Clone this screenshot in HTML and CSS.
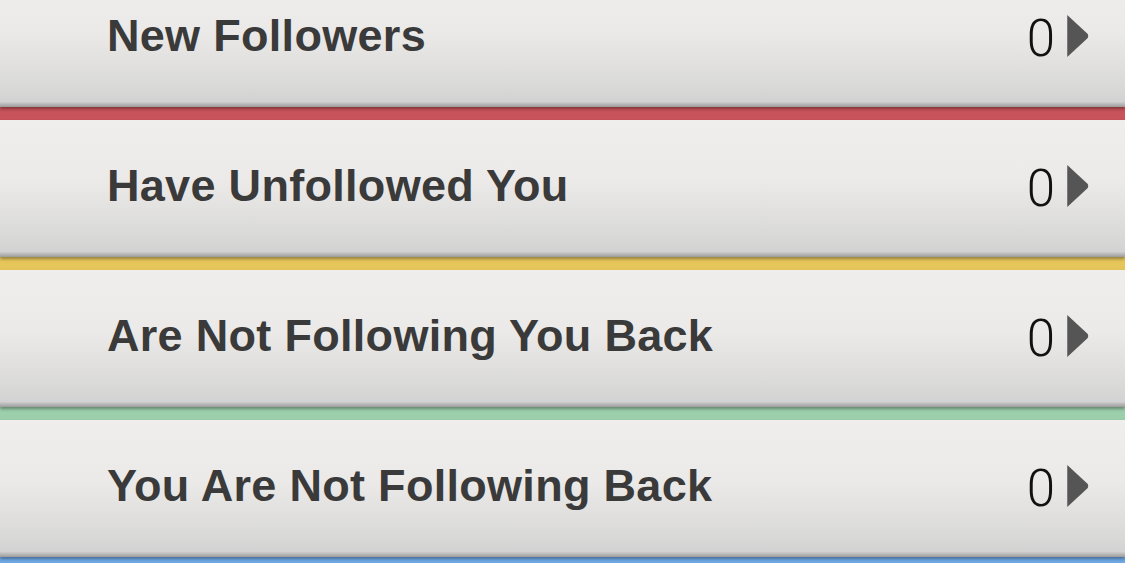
FILE: index.html
```html
<!DOCTYPE html>
<html lang="en">
<head>
<meta charset="utf-8">
<title>Followers</title>
<link rel="stylesheet" href="styles.css">
</head>
<body>
  <ul class="stats">
    <li class="stat">
      <div class="stat-row">
        <span class="stat-label">New Followers</span>
        <span class="stat-count">0</span>
        <svg class="chevron" viewBox="0 0 22 43" aria-hidden="true"><path d="M0 0 L21 19.5 Q22 21.5 21 23.5 L0 43 Z"/></svg>
      </div>
      <div class="stripe stripe-red"></div>
    </li>
    <li class="stat">
      <div class="stat-row">
        <span class="stat-label">Have Unfollowed You</span>
        <span class="stat-count">0</span>
        <svg class="chevron" viewBox="0 0 22 43" aria-hidden="true"><path d="M0 0 L21 19.5 Q22 21.5 21 23.5 L0 43 Z"/></svg>
      </div>
      <div class="stripe stripe-yellow"></div>
    </li>
    <li class="stat">
      <div class="stat-row">
        <span class="stat-label">Are Not Following You Back</span>
        <span class="stat-count">0</span>
        <svg class="chevron" viewBox="0 0 22 43" aria-hidden="true"><path d="M0 0 L21 19.5 Q22 21.5 21 23.5 L0 43 Z"/></svg>
      </div>
      <div class="stripe stripe-green"></div>
    </li>
    <li class="stat">
      <div class="stat-row">
        <span class="stat-label">You Are Not Following Back</span>
        <span class="stat-count">0</span>
        <svg class="chevron" viewBox="0 0 22 43" aria-hidden="true"><path d="M0 0 L21 19.5 Q22 21.5 21 23.5 L0 43 Z"/></svg>
      </div>
      <div class="stripe stripe-blue"></div>
    </li>
  </ul>
</body>
</html>
```

FILE: styles.css
```css
html, body {
  margin: 0;
  padding: 0;
  background: #e6e6e4;
  overflow: hidden;
}

.stats {
  list-style: none;
  margin: -30px 0 0;
  padding: 0;
  display: flex;
  flex-direction: column;
}

.stat {
  display: flex;
  flex-direction: column;
}

.stat-row {
  position: relative;
  z-index: 1;
  height: 137px;
  display: flex;
  align-items: center;
  padding: 0 36px 0 107px;
  background: linear-gradient(to bottom, #efeeec 0%, #ebeae8 45%, #d9d9d8 85%, #d2d2d2 96%, #9c9c9c 100%);
  box-shadow: 0 2px 3px rgba(0, 0, 0, 0.35);
}

.stat-label {
  flex: 1;
  font-family: "Liberation Sans", Arial, sans-serif;
  font-weight: 700;
  font-size: 45px;
  letter-spacing: 0.3px;
  color: #3a3a3a;
  margin-top: -6px;
}

.stat-count {
  font-family: Roboto, "Liberation Sans", sans-serif;
  font-weight: 300;
  font-size: 51px;
  color: #111;
  margin-top: 0;
}

.chevron {
  width: 22px;
  height: 42px;
  margin-left: 12px;
  margin-top: -6px;
  fill: #555;
}

.stripe {
  height: 13px;
}

.stripe-red { background: #c9535a; }
.stripe-yellow { background: #e6c65b; }
.stripe-green { background: #9ccfac; }
.stripe-blue { background: #70a9e7; }
```
